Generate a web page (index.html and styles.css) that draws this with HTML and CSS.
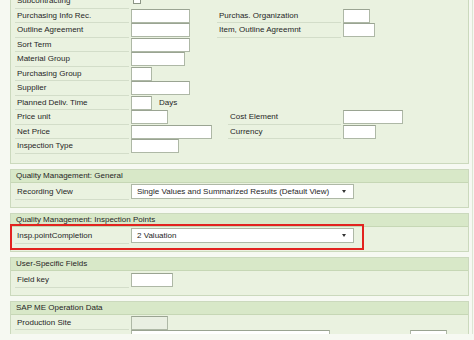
FILE: index.html
```html
<!DOCTYPE html>
<html lang="en">
<head>
  <meta charset="UTF-8" />
  <title>Operation Details</title>
  <link rel="stylesheet" href="styles.css">
</head>
<body>

<div id="page">

  <div class="panel first">
    <div class="row">
      <div class="cell"><span class="lbl">Subcontracting</span><span class="chk"></span></div>
    </div>
    <div class="row">
      <div class="cell"><span class="lbl">Purchasing Info Rec.</span><span class="fld w59"></span></div>
      <div class="cell"><span class="lbl r">Purchas. Organization</span><span class="fld w27"></span></div>
    </div>
    <div class="row">
      <div class="cell"><span class="lbl">Outline Agreement</span><span class="fld w59"></span></div>
      <div class="cell"><span class="lbl r">Item, Outline Agreemnt</span><span class="fld w32"></span></div>
    </div>
    <div class="row">
      <div class="cell"><span class="lbl">Sort Term</span><span class="fld w59"></span></div>
    </div>
    <div class="row">
      <div class="cell"><span class="lbl">Material Group</span><span class="fld w54"></span></div>
    </div>
    <div class="row">
      <div class="cell"><span class="lbl">Purchasing Group</span><span class="fld w21"></span></div>
    </div>
    <div class="row">
      <div class="cell"><span class="lbl">Supplier</span><span class="fld w59"></span></div>
    </div>
    <div class="row">
      <div class="cell"><span class="lbl">Planned Deliv. Time</span><span class="fld w21"></span><span class="unit">Days</span></div>
    </div>
    <div class="row">
      <div class="cell wide"><span class="lbl">Price unit</span><span class="fld w37"></span></div>
      <div class="cell"><span class="lbl r2">Cost Element</span><span class="fld w60"></span></div>
    </div>
    <div class="row">
      <div class="cell wide"><span class="lbl">Net Price</span><span class="fld w81"></span></div>
      <div class="cell"><span class="lbl r2">Currency</span><span class="fld w33"></span></div>
    </div>
    <div class="row">
      <div class="cell wide"><span class="lbl">Inspection Type</span><span class="fld w48"></span></div>
    </div>
  </div>

  <div class="panel">
    <div class="head">Quality Management: General</div>
    <div class="body">
      <div class="row tall">
        <div class="cell free"><span class="lbl">Recording View</span>
          <span class="select">Single Values and Summarized Results (Default View)<i class="arrow"></i></span></div>
      </div>
    </div>
  </div>

  <div class="panel">
    <div class="head">Quality Management: Inspection Points</div>
    <div class="body">
      <div class="row tall">
        <div class="cell free"><span class="lbl">Insp.pointCompletion</span>
          <span class="select">2 Valuation<i class="arrow"></i></span></div>
      </div>
    </div>
    <div class="highlight"></div>
  </div>

  <div class="panel">
    <div class="head">User-Specific Fields</div>
    <div class="body">
      <div class="row tall">
        <div class="cell"><span class="lbl">Field key</span><span class="fld w42"></span></div>
      </div>
    </div>
  </div>

  <div class="panel">
    <div class="head">SAP ME Operation Data</div>
    <div class="body">
      <div class="row">
        <div class="cell"><span class="lbl">Production Site</span><span class="fld w37 off"></span></div>
      </div>
      <div class="row">
        <div class="cell free"><span class="lbl">Operation</span><span class="fld w199"></span>
          <span class="lbl s">Step ID</span><span class="fld w37"></span></div>
      </div>
    </div>
  </div>

</div>

</body>
</html>
```

FILE: styles.css
```css
body {
  margin: 0;
  background: #f6f9f2;
  font-family: "Liberation Sans", Arial, sans-serif;
  font-size: 8px;
  color: #262626;
  overflow: hidden;
}
#page {
  width: 459px;
  height: 340px;
  padding-left: 10px;
  padding-right: 3px;
  border-right: 1px solid #dde6d3;
}
.panel {
  position: relative;
  background: #eaf2e0;
  border: 1px solid #cbd9bd;
  margin-top: 5px;
}
.panel.first {
  margin-top: -6px;
  padding-bottom: 9px;
  border-top: none;
}
.head {
  height: 12px;
  line-height: 12px;
  padding-left: 5px;
  background: #d8e8c8;
  border-bottom: 1px solid #c6d7b5;
}
.body {
  padding: 1px 0 7px;
}
.row {
  display: flex;
  height: 14.5px;
  align-items: center;
  padding-left: 4px;
}
.row.tall {
  height: 16px;
}
.cell {
  display: flex;
  align-items: center;
  flex-shrink: 0;
  height: 100%;
  width: 202px;
}
.cell.wide {
  width: 213px;
}
.cell.free {
  width: auto;
}
.lbl {
  box-sizing: border-box;
  flex-shrink: 0;
  width: 114px;
  height: 100%;
  display: flex;
  align-items: center;
  padding-left: 2px;
  margin-right: 2px;
  white-space: nowrap;
  border-bottom: 1px solid #d3ddc9;
}
.lbl.r {
  width: 124px;
}
.lbl.r2 {
  width: 113px;
}
.lbl.s {
  width: auto;
  border-bottom: none;
  margin-left: 14px;
  margin-right: 37px;
}
.fld {
  box-sizing: border-box;
  flex-shrink: 0;
  height: 14px;
  background: #fff;
  border: 1px solid #aeb8a6;
  border-top-color: #9aa492;
}
.fld.off {
  background: #e9efe2;
}
.w21 { width: 21px; }
.w27 { width: 27px; }
.w32 { width: 32px; }
.w33 { width: 33px; }
.w37 { width: 37px; }
.w42 { width: 42px; }
.w48 { width: 48px; }
.w54 { width: 54px; }
.w59 { width: 59px; }
.w60 { width: 60px; }
.w81 { width: 81px; }
.w199 { width: 199px; }
.chk {
  box-sizing: border-box;
  width: 8px;
  height: 8px;
  margin-left: 2px;
  margin-top: -3px;
  background: #fff;
  border: 1px solid #8c9585;
}
.unit {
  margin-left: 7px;
}
.select {
  box-sizing: border-box;
  position: relative;
  flex-shrink: 0;
  display: flex;
  align-items: center;
  width: 223px;
  height: 15px;
  padding-left: 5px;
  background: #fff;
  border: 1px solid #aeb8a6;
  white-space: nowrap;
}
.arrow {
  position: absolute;
  right: 7px;
  top: 5px;
  border-left: 2.5px solid transparent;
  border-right: 2.5px solid transparent;
  border-top: 3px solid #333;
}
.highlight {
  position: absolute;
  left: -1px;
  top: 10px;
  width: 350px;
  height: 22px;
  border: 2.5px solid #e2231f;
}
```
